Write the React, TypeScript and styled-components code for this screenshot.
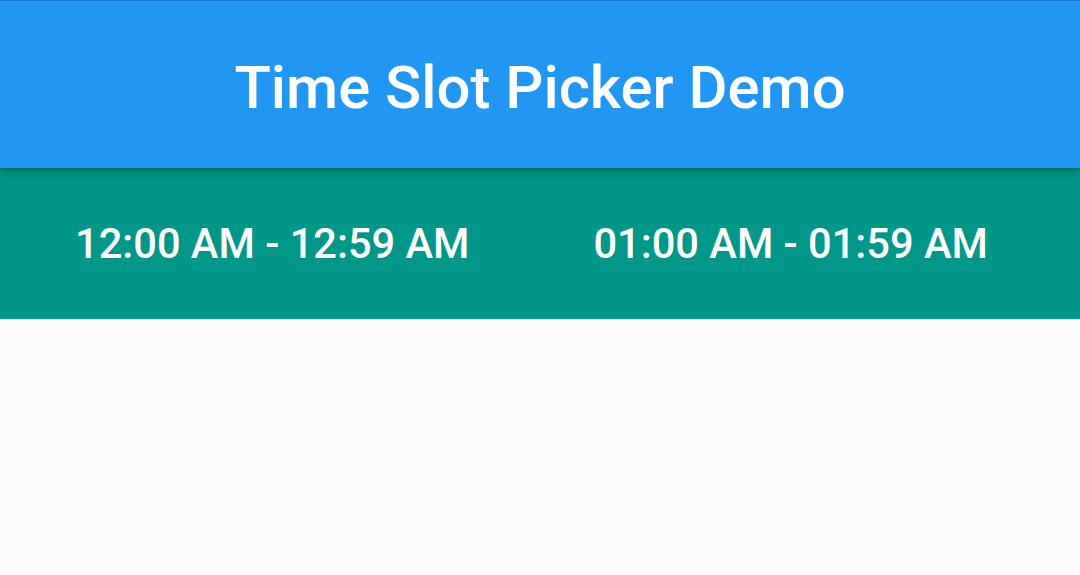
import React from "react";
import styled, { createGlobalStyle } from "styled-components";

const Global = createGlobalStyle`
  html, body { margin: 0; padding: 0; }
  body {
    background: #fafafa;
    font-family: Roboto, "Noto Sans", sans-serif;
    width: 1080px;
    height: 575px;
    overflow: hidden;
  }
`;

const Page = styled.div`
  display: flex;
  flex-direction: column;
  height: 575px;
  background: #fafafa;
`;

const AppBar = styled.header`
  position: relative;
  z-index: 2;
  height: 168px;
  border-top: 1px solid #1a7ad0;
  box-sizing: border-box;
  background: #2196f3;
  display: flex;
  align-items: center;
  justify-content: center;
  box-shadow: 0 2px 4px rgba(0, 0, 0, 0.2), 0 4px 10px rgba(0, 0, 0, 0.14);
`;

const Title = styled.h1`
  margin: 0;
  padding-top: 7px;
  color: #ffffff;
  font-family: Roboto, sans-serif;
  font-weight: 500;
  font-size: 59.8px;
  letter-spacing: 0;
`;

const SlotStrip = styled.div`
  height: 151px;
  background: #009688;
  display: flex;
  align-items: center;
  gap: 124px;
  padding-left: 75px;
  overflow: hidden;
`;

const Slot = styled.span`
  color: #ffffff;
  font-family: Roboto, sans-serif;
  font-weight: 500;
  font-size: 41.6px;
  white-space: nowrap;
  line-height: 1;
`;

const slots = ["12:00 AM - 12:59 AM", "01:00 AM - 01:59 AM"];

export default function App() {
  return (
    <Page>
      <Global />
      <AppBar>
        <Title>Time Slot Picker Demo</Title>
      </AppBar>
      <SlotStrip>
        {slots.map((s) => (
          <Slot key={s}>{s}</Slot>
        ))}
      </SlotStrip>
    </Page>
  );
}
